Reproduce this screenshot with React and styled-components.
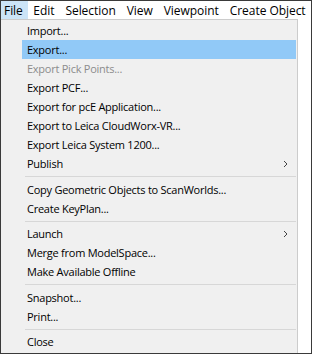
import styled, { createGlobalStyle } from 'styled-components';

const GlobalStyle = createGlobalStyle`
  html, body {
    margin: 0;
    padding: 0;
    background: #ffffff;
  }

  body {
    font-family: 'Open Sans', 'Noto Sans', sans-serif;
    font-size: 11px;
    letter-spacing: -0.25px;
    color: #000000;
  }
`;

const StyledFrame = styled.div`
  box-sizing: border-box;
  display: flex;
  flex-direction: column;
  width: 312px;
  height: 354px;
  border: 1px solid #3a3a3a;
  background-color: #ffffff;
  overflow: hidden;
`;

const StyledMenuBar = styled.nav`
  display: flex;
  align-items: stretch;
  height: 18px;
  flex-shrink: 0;
  font-size: 12px;
  letter-spacing: -0.05px;
`;

const StyledBarItem = styled.div`
  display: flex;
  align-items: center;
  padding: ${({ first }) => (first ? '0 5px 0 3px' : '0 5.5px')};
  white-space: nowrap;
  background-color: ${({ active }) => (active ? '#cce4f7' : 'transparent')};
`;

const StyledDropdown = styled.ul`
  box-sizing: border-box;
  flex: 1;
  width: 297px;
  margin: 0;
  padding: 1px 0 0;
  list-style: none;
  border-top: 1px solid #cccccc;
  border-right: 1px solid #cccccc;
  background-color: #f0f0f0;
`;

const StyledItem = styled.li`
  display: flex;
  align-items: center;
  justify-content: space-between;
  height: 19px;
  margin: 0 1px 0 21px;
  padding: 0 8px 0 5px;
  white-space: nowrap;
  color: ${({ disabled }) => (disabled ? '#8c8c8c' : '#000000')};
  background-color: ${({ active }) => (active ? '#91c9f7' : 'transparent')};
`;

const StyledSeparator = styled.li`
  height: 1px;
  margin: 3px 1px 2.5px 24px;
  background-color: #d7d7d7;
`;

const StyledChevron = styled.svg`
  display: block;
  width: 5px;
  height: 8px;
`;

function Chevron() {
  return (
    <StyledChevron viewBox='0 0 5 8'>
      <polyline points='1,1 4,4 1,7' fill='none' stroke='#444444' strokeWidth='1' />
    </StyledChevron>
  );
}

const BAR_ITEMS = ['File', 'Edit', 'Selection', 'View', 'Viewpoint', 'Create Object'];

const MENU = [
  { label: 'Import...' },
  { label: 'Export...', active: true },
  { label: 'Export Pick Points...', disabled: true },
  { label: 'Export PCF...' },
  { label: 'Export for pcE Application...' },
  { label: 'Export to Leica CloudWorx-VR...' },
  { label: 'Export Leica System 1200...' },
  { label: 'Publish', submenu: true },
  { separator: true },
  { label: 'Copy Geometric Objects to ScanWorlds...' },
  { label: 'Create KeyPlan...' },
  { separator: true },
  { label: 'Launch', submenu: true },
  { label: 'Merge from ModelSpace...' },
  { label: 'Make Available Offline' },
  { separator: true },
  { label: 'Snapshot...' },
  { label: 'Print...' },
  { separator: true },
  { label: 'Close' },
];

export default function App() {
  return (
    <>
      <GlobalStyle />
      <StyledFrame>
        <StyledMenuBar>
          {BAR_ITEMS.map((item, i) => (
            <StyledBarItem key={item} first={i === 0} active={i === 0}>
              {item}
            </StyledBarItem>
          ))}
        </StyledMenuBar>
        <StyledDropdown>
          {MENU.map((entry, i) =>
            entry.separator ? (
              <StyledSeparator key={i} />
            ) : (
              <StyledItem key={i} active={entry.active} disabled={entry.disabled}>
                <span>{entry.label}</span>
                {entry.submenu && <Chevron />}
              </StyledItem>
            ),
          )}
        </StyledDropdown>
      </StyledFrame>
    </>
  );
}
